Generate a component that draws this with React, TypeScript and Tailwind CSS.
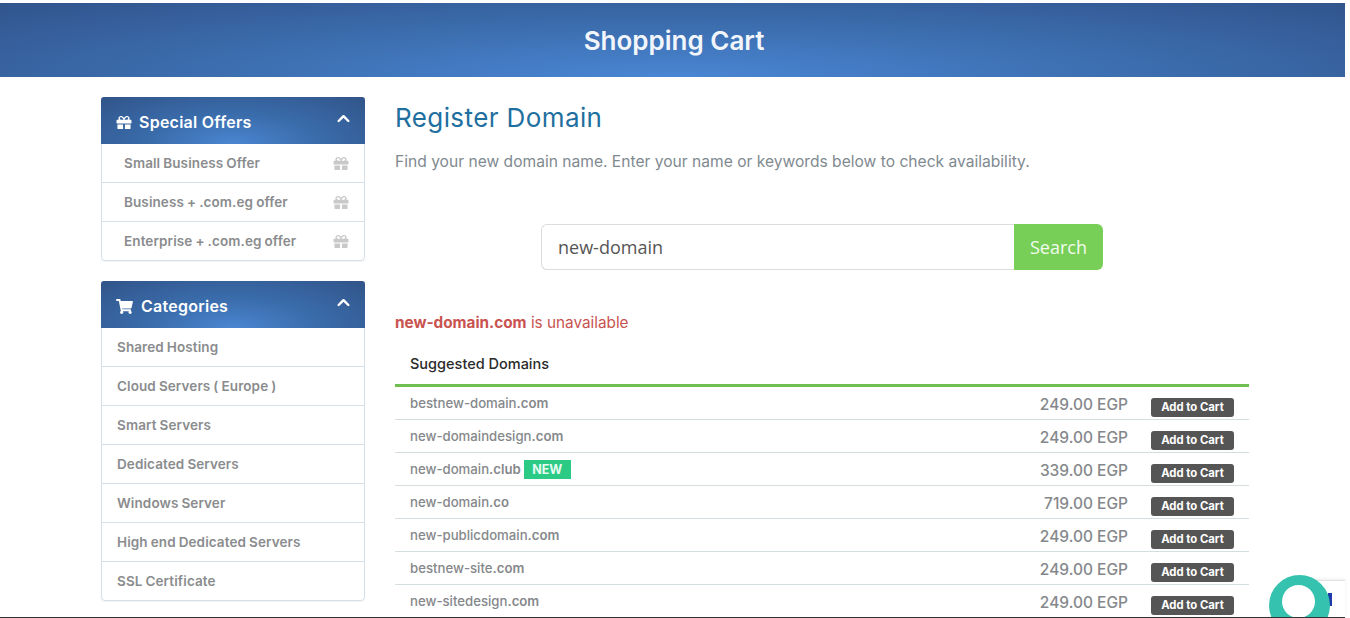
import { FaGift, FaShoppingCart } from "react-icons/fa";

const font = "font-['Inter','Liberation_Sans',sans-serif]";

function Chevron() {
  return (
    <svg viewBox="0 0 14 9" className="w-[13px] h-[9px] -mt-[5px]" fill="none" stroke="white" strokeWidth="2.600" strokeLinecap="round" strokeLinejoin="round">
      <path d="M1.800 7.200 7 2l5.200 5.200" />
    </svg>
  );
}

const panelHead = "h-[47px] flex items-center justify-between rounded-t-[3px] bg-[radial-gradient(ellipse_at_50%_100%,#4a86d0_0%,#3a6cab_45%,#315489_100%)] text-white";

function Panel({ icon, title, children, iconGap }: { icon: React.ReactNode; title: string; children: React.ReactNode; iconGap: string }) {
  return (
    <div className="w-[264px] rounded-[4px] border border-[#d5dfe8] shadow-[0_1px_1px_rgba(0,0,0,0.05)]">
      <div className={panelHead + " -mx-px -mt-px pl-[15px] pr-[15px]"}>
        <div className={"flex items-center pt-[3px] " + iconGap}>
          {icon}
          <span className="text-[16px] font-semibold tracking-[0.25px]">{title}</span>
        </div>
        <Chevron />
      </div>
      {children}
    </div>
  );
}

const offers = ["Small Business Offer", "Business + .com.eg offer", "Enterprise + .com.eg offer"];
const cats = ["Shared Hosting", "Cloud Servers ( Europe )", "Smart Servers", "Dedicated Servers", "Windows Server", "High end Dedicated Servers", "SSL Certificate"];
const rows = [
  ["bestnew-domain", ".com", "249.00 EGP", false],
  ["new-domaindesign", ".com", "249.00 EGP", false],
  ["new-domain", ".club", "339.00 EGP", true],
  ["new-domain", ".co", "719.00 EGP", false],
  ["new-publicdomain", ".com", "249.00 EGP", false],
  ["bestnew-site", ".com", "249.00 EGP", false],
  ["new-sitedesign", ".com", "249.00 EGP", false],
] as const;

const itemText = "text-[#8a8c8e] text-[13.500px] font-semibold tracking-[0.1px] [word-spacing:-0.5px]";

export default function App() {
  return (
    <div className={"w-[1350px] h-[618px] overflow-hidden bg-white relative " + font}>
      <div className="h-[3px] bg-white" />
      <header className="w-[1345px] h-[74px] flex items-center justify-center bg-[radial-gradient(ellipse_at_50%_100%,#4a86d4_0%,#3e72b5_40%,#31548c_100%)]">
        <h1 className="pl-[3px] text-[26px] font-semibold text-[#f2f6fb]">Shopping Cart</h1>
      </header>

      <div className="flex pl-[101px] pt-[20px]">
        <aside className="w-[264px] flex flex-col gap-[20px]">
          <Panel title="Special Offers" iconGap="gap-[7px]" icon={<FaGift className="w-[16px] h-[15px]" />}>
            {offers.map((o, i) => (
              <div key={o} className={"flex items-center justify-between pl-[22px] pr-[15px] " + itemText + " " + (i ? "h-[39px] border-t border-[#d5dfe8]" : "h-[38px]")}>
                <span>{o}</span>
                <FaGift className="w-[16px] h-[15px] text-[#c9c9c9]" />
              </div>
            ))}
          </Panel>
          <Panel title="Categories" iconGap="gap-[8px]" icon={<FaShoppingCart className="w-[17px] h-[15px]" />}>
            {cats.map((c, i) => (
              <div key={c} className={"flex items-center pl-[15px] " + itemText + " " + (i ? "h-[39px] border-t border-[#d5dfe8]" : "h-[38px]")}>
                {c}
              </div>
            ))}
          </Panel>
        </aside>

        <main className="ml-[30px] w-[854px]">
          <h2 className="text-[26px] leading-[32px] mt-[5px] text-[#1f6f9f] font-normal tracking-[0.4px]">Register Domain</h2>
          <p className="mt-[17px] text-[15.600px] leading-[22px] text-[#7f8a90]">Find your new domain name. Enter your name or keywords below to check availability.</p>

          <div className="mt-[51px] ml-[146px] w-[562px] h-[46px] flex">
            <div className="flex-1 flex items-center pl-[16px] border border-[#dcdcdc] border-r-0 rounded-l-[6px] text-[18px] text-[#555555] font-['Open_Sans',sans-serif]">new-domain</div>
            <button className="w-[89px] bg-[#78cf58] rounded-r-[6px] text-[18px] text-[#f2fbee] font-['Open_Sans',sans-serif]">Search</button>
          </div>

          <p className="mt-[42px] text-[15.300px] leading-[22px] text-[#c9534f]"><strong className="font-bold">new-domain.com</strong> is unavailable</p>

          <div className="mt-[9px] h-[44px] flex items-center pl-[15px] border-b-[3px] border-[#6fc050] text-[14.500px] font-medium text-[#2b2b2b]">Suggested Domains</div>
          {rows.map(([n, t, p, isNew], i) => (
            <div key={n + t + i} className="h-[33px] flex items-center pl-[15px] pr-[15px] border-b border-[#d5dde0] text-[#85888b]">
              <span className="flex items-center pt-[2px] text-[13.200px] font-medium">
                {n}<span className="font-semibold">{t}</span>
                {isNew && <span className="ml-[3px] h-[19px] w-[47px] flex items-center justify-center bg-[#2bcb85] text-[#e8faf2] text-[12.500px] font-bold">NEW</span>}
              </span>
              <span className="ml-auto pt-[4px] text-[15.500px] font-medium">{p}</span>
              <button className="ml-[23px] mt-[9px] w-[83px] h-[19px] rounded-[3px] bg-[#555555] text-white text-[11.300px] font-bold leading-none">Add to Cart</button>
            </div>
          ))}
        </main>
      </div>

      <div className="absolute left-[1300px] top-[580px] w-[45px] h-[38px] bg-white border-t border-[#e2e2e2] shadow-[0_-1px_3px_rgba(0,0,0,0.08)]">
        <div className="absolute left-[28px] top-[12px] w-[4px] h-[13px] bg-[#1c3aa9]" />
      </div>
      <div className="absolute left-[1269px] top-[575px] w-[61px] h-[61px] rounded-full bg-[#35c2ae]">
        <div className="absolute left-[13px] top-[10px] w-[33px] h-[33px] rounded-full bg-white" />
      </div>
      <div className="absolute left-0 bottom-0 w-[1345px] h-[1px] bg-[#333333]" />
    </div>
  );
}
